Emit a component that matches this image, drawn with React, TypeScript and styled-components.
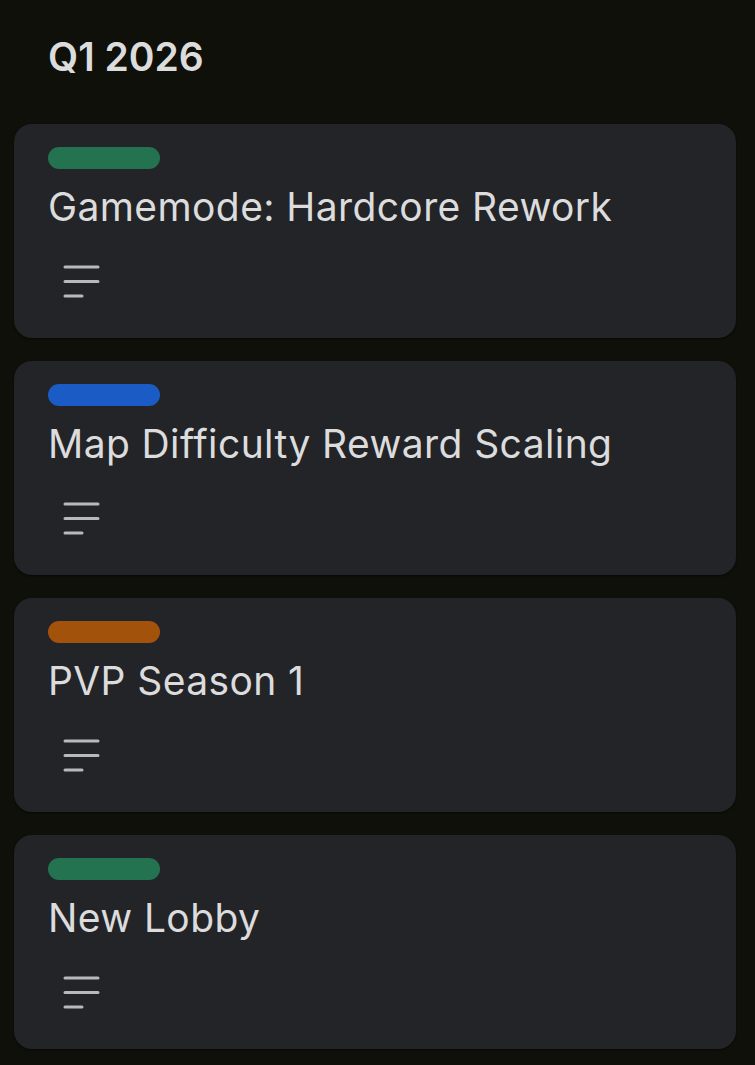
import styled, { createGlobalStyle } from "styled-components";

interface Item {
    title: string;
    color: string;
}

const items: Item[] = [
    { title: "Gamemode: Hardcore Rework", color: "#237351" },
    { title: "Map Difficulty Reward Scaling", color: "#1a5bc6" },
    { title: "PVP Season 1", color: "#a3520b" },
    { title: "New Lobby", color: "#237351" },
];

const DescriptionIcon = () => (
    <svg width="38" height="35" viewBox="0 0 38 35" fill="none">
        <path d="M3 3H36M3 17.5H36M3 32H20" stroke="#b9b9bb" strokeWidth="3" strokeLinecap="round" />
    </svg>
);

const App = () => {
    return (
        <>
            <GlobalStyle />
            <Column>
                <Heading>Q1 2026</Heading>
                <List>
                    {items.map((item) => (
                        <Card key={item.title}>
                            <Label $color={item.color} />
                            <Title>{item.title}</Title>
                            <IconRow>
                                <DescriptionIcon />
                            </IconRow>
                        </Card>
                    ))}
                </List>
            </Column>
        </>
    );
};

export default App;

const GlobalStyle = createGlobalStyle`
    html, body {
        margin: 0;
        background: #0f100a;
    }
    body {
        font-family: Inter, "Noto Sans", sans-serif;
    }
`

const Column = styled.div`
    width: 755px;
    height: 1065px;
    box-sizing: border-box;
    padding: 32px 19px 0 14px;
    overflow: hidden;
`

const Heading = styled.h2`
    margin: 0 0 0 34px;
    height: 92px;
    font-size: 39px;
    font-weight: 600;
    color: #dcdcdd;
    line-height: 50px;
`

const List = styled.div`
    display: flex;
    flex-direction: column;
    gap: 23px;
`

const Card = styled.div`
    height: 214px;
    box-sizing: border-box;
    padding: 23px 34px 0;
    background: #232428;
    border-radius: 18px;
    box-shadow: 0 1px 2px rgba(0, 0, 0, 0.5);
`

const Label = styled.div<{ $color: string }>`
    width: 112px;
    height: 22px;
    border-radius: 11px;
    background: ${(p) => p.$color};
`

const Title = styled.div`
    margin-top: 14px;
    font-size: 39px;
    letter-spacing: 0.4px;
    line-height: 48px;
    color: #dcdcdd;
`

const IconRow = styled.div`
    display: flex;
    margin-top: 33px;
    padding-left: 14px;
`
